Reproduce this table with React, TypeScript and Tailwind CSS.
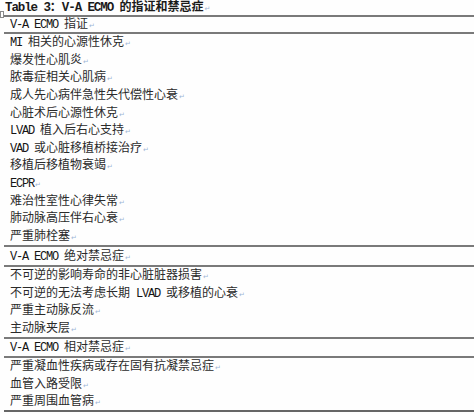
import React from 'react';

const indications = [
  'MI 相关的心源性休克',
  '爆发性心肌炎',
  '脓毒症相关心肌病',
  '成人先心病伴急性失代偿性心衰',
  '心脏术后心源性休克',
  'LVAD 植入后右心支持',
  'VAD 或心脏移植桥接治疗',
  '移植后移植物衰竭',
  'ECPR',
  '难治性室性心律失常',
  '肺动脉高压伴右心衰',
  '严重肺栓塞',
];

const absolute = ['不可逆的影响寿命的非心脏脏器损害', '不可逆的无法考虑长期 LVAD 或移植的心衰', '严重主动脉反流', '主动脉夹层'];

const relative = ['严重凝血性疾病或存在固有抗凝禁忌症', '血管入路受限', '严重周围血管病'];

// split latin runs so they get the narrow half-width look of the original
function Mixed({ text, bold }: { text: string; bold?: boolean }) {
  const parts = text.split(/([\x20-\x7E]+)/).filter(Boolean);
  return (
    <>
      {parts.map((p, i) =>
        /^[\x20-\x7E]+$/.test(p) ? (
          <span
            key={i}
            className={
              bold
                ? "whitespace-pre font-['Liberation_Mono',monospace] text-[12.5px] font-bold tracking-[-1.1px]"
                : "whitespace-pre font-['Liberation_Mono',monospace] text-[12px] tracking-[-1.2px] text-[#151515]"
            }
          >
            {p}
          </span>
        ) : (
          <span key={i} className={bold ? 'inline-block leading-[14px]' : ''}>
            {p}
          </span>
        )
      )}
    </>
  );
}

function Mark() {
  return <span className="ml-[1px] font-['DejaVu_Sans',sans-serif] text-[7px] font-normal text-[#9fb6d6]">↵</span>;
}

function Rule({ thick }: { thick?: boolean }) {
  return <div className={thick ? 'h-[2px] bg-[#666]' : 'h-[2px] bg-[#7a7a7a]'} />;
}

function Row({ text, h }: { text: string; h: string }) {
  return (
    <div className={`flex items-center pl-[6px] ${h}`}>
      <span className="leading-[14px]">
        <Mixed text={text} />
        <Mark />
      </span>
    </div>
  );
}

export default function App() {
  return (
    <div className="relative h-[414px] w-[474px] overflow-hidden bg-[#fefefe] font-['Noto_Sans_CJK_SC',sans-serif] text-[12px] leading-none text-[#2a2a2a]">
      <div className="absolute left-0 top-[11px] h-[7px] w-[4px] border border-[#8a8a8a] bg-white" />

      <div className="flex h-[15px] items-center pl-[5px] font-bold text-[#1a1a1a]">
        <span className="leading-[14px]">
          <Mixed text="Table 3" bold />
          <Mixed text="：" bold />
          <Mixed text="V-A ECMO " bold />
          <Mixed text="的指证和禁忌症" bold />
          <Mark />
        </span>
      </div>

      <div className="ml-[4px] flex flex-col">
        <Rule />
        <Row text="V-A ECMO 指证" h="h-[15px]" />
        <Rule />
        {indications.map((t) => (
          <Row key={t} text={t} h="h-[17.6px]" />
        ))}
        <Rule />
        <Row text="V-A ECMO 绝对禁忌症" h="h-[18px]" />
        <Rule />
        {absolute.map((t) => (
          <Row key={t} text={t} h="h-[17.5px]" />
        ))}
        <Rule />
        <Row text="V-A ECMO 相对禁忌症" h="h-[17px]" />
        <Rule />
        {relative.map((t) => (
          <Row key={t} text={t} h="h-[17.4px]" />
        ))}
        <Rule thick />
      </div>
    </div>
  );
}
